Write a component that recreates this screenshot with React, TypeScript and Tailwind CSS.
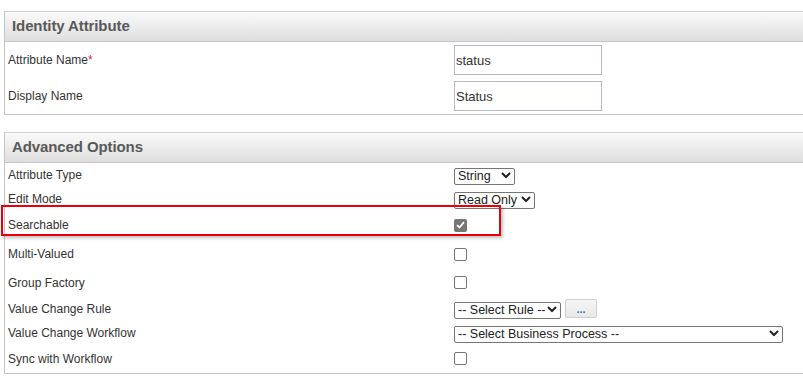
import React from 'react';

const font = { fontFamily: '"Liberation Sans", Arial, sans-serif' };

function Header({ title }: { title: string }) {
  return (
    <div className="h-[30px] flex items-center pl-[7px] border-b border-[#c9c9c9] bg-gradient-to-b from-[#fafafa] to-[#dedede]">
      <span className="text-[15px] font-bold text-[#595959] tracking-[-0.1px]">{title}</span>
    </div>
  );
}

function Row({ label, required, h, children }: { label: string; required?: boolean; h: string; children?: React.ReactNode }) {
  return (
    <div className={`flex items-center ${h}`}>
      <div className="w-[449px] pl-[3px] text-[12px] text-[#333]">
        {label}
        {required && <span className="text-[#e0245e]">*</span>}
      </div>
      <div className="flex items-center gap-[4px]">{children}</div>
    </div>
  );
}

function Chevron() {
  return (
    <svg width="10" height="7" viewBox="0 0 10 7" className="absolute right-[4px] top-1/2 -translate-y-1/2 pointer-events-none">
      <path d="M1 1.5 L5 5.5 L9 1.5" fill="none" stroke="#222" strokeWidth="2" />
    </svg>
  );
}

function Select({ value, w }: { value: string; w: string }) {
  return (
    <div className={`relative ${w}`}>
      <select
        defaultValue={value}
        className="appearance-none w-full h-[17px] border border-[#767676] rounded-[2px] bg-white pl-[3px] pr-[12px] text-[12.5px] leading-[15px] text-[#222] outline-none"
      >
        <option>{value}</option>
      </select>
      <Chevron />
    </div>
  );
}

function Checkbox({ checked }: { checked?: boolean }) {
  if (checked) {
    return (
      <span className="w-[13px] h-[13px] rounded-[2px] bg-[#767676] flex items-center justify-center">
        <svg width="9" height="8" viewBox="0 0 9 8">
          <path d="M1 4.2 L3.4 6.5 L8 1.2" fill="none" stroke="#fff" strokeWidth="1.8" />
        </svg>
      </span>
    );
  }
  return <span className="w-[13px] h-[13px] rounded-[2px] border border-[#767676] bg-white" />;
}

function TextInput({ value }: { value: string }) {
  return (
    <input
      defaultValue={value}
      className="w-[148px] h-[30px] border border-[#b9b9cb] pl-[1px] text-[13px] text-[#333] outline-none"
    />
  );
}

export default function App() {
  return (
    <div className="w-[803px] h-[384px] overflow-hidden bg-white pt-[11px]" style={font}>
      <div className="ml-[4px] w-[820px] border-t border-l border-b border-t-[#d4d4d4] border-l-[#cbc3c3] border-b-[#cbc3c3]">
        <Header title="Identity Attribute" />
        <Row label="Attribute Name" required h="h-[36px]">
          <TextInput value="status" />
        </Row>
        <Row label="Display Name" h="h-[36px]">
          <TextInput value="Status" />
        </Row>
      </div>

      <div className="relative mt-[17px] ml-[4px] w-[820px] border-t border-l border-b border-t-[#d4d4d4] border-l-[#cbc3c3] border-b-[#cbc3c3]">
        <Header title="Advanced Options" />
        <Row label="Attribute Type" h="h-[24px]">
          <Select value="String" w="w-[61px]" />
        </Row>
        <Row label="Edit Mode" h="h-[24px]">
          <Select value="Read Only" w="w-[81px]" />
        </Row>
        <Row label="Searchable" h="h-[28px]">
          <Checkbox checked />
        </Row>
        <Row label="Multi-Valued" h="h-[30px]">
          <Checkbox />
        </Row>
        <Row label="Group Factory" h="h-[27px]">
          <Checkbox />
        </Row>
        <Row label="Value Change Rule" h="h-[25px]">
          <Select value="-- Select Rule --" w="w-[107px]" />
          <button className="w-[32px] h-[19px] border border-[#cfcfcf] rounded-[2px] bg-gradient-to-b from-[#f6f6f6] to-[#e8e8e8] text-[11px] leading-[12px] font-bold text-[#2c74b8]">
            ...
          </button>
        </Row>
        <Row label="Value Change Workflow" h="h-[23px]">
          <Select value="-- Select Business Process --" w="w-[329px]" />
        </Row>
        <Row label="Sync with Workflow" h="h-[29px]">
          <Checkbox />
        </Row>

        <div className="absolute left-[-4px] top-[72px] w-[500px] h-[31px] border-2 border-[#e8000b] shadow-[2px_2px_3px_rgba(0,0,0,0.25)] pointer-events-none" />
      </div>
    </div>
  );
}
